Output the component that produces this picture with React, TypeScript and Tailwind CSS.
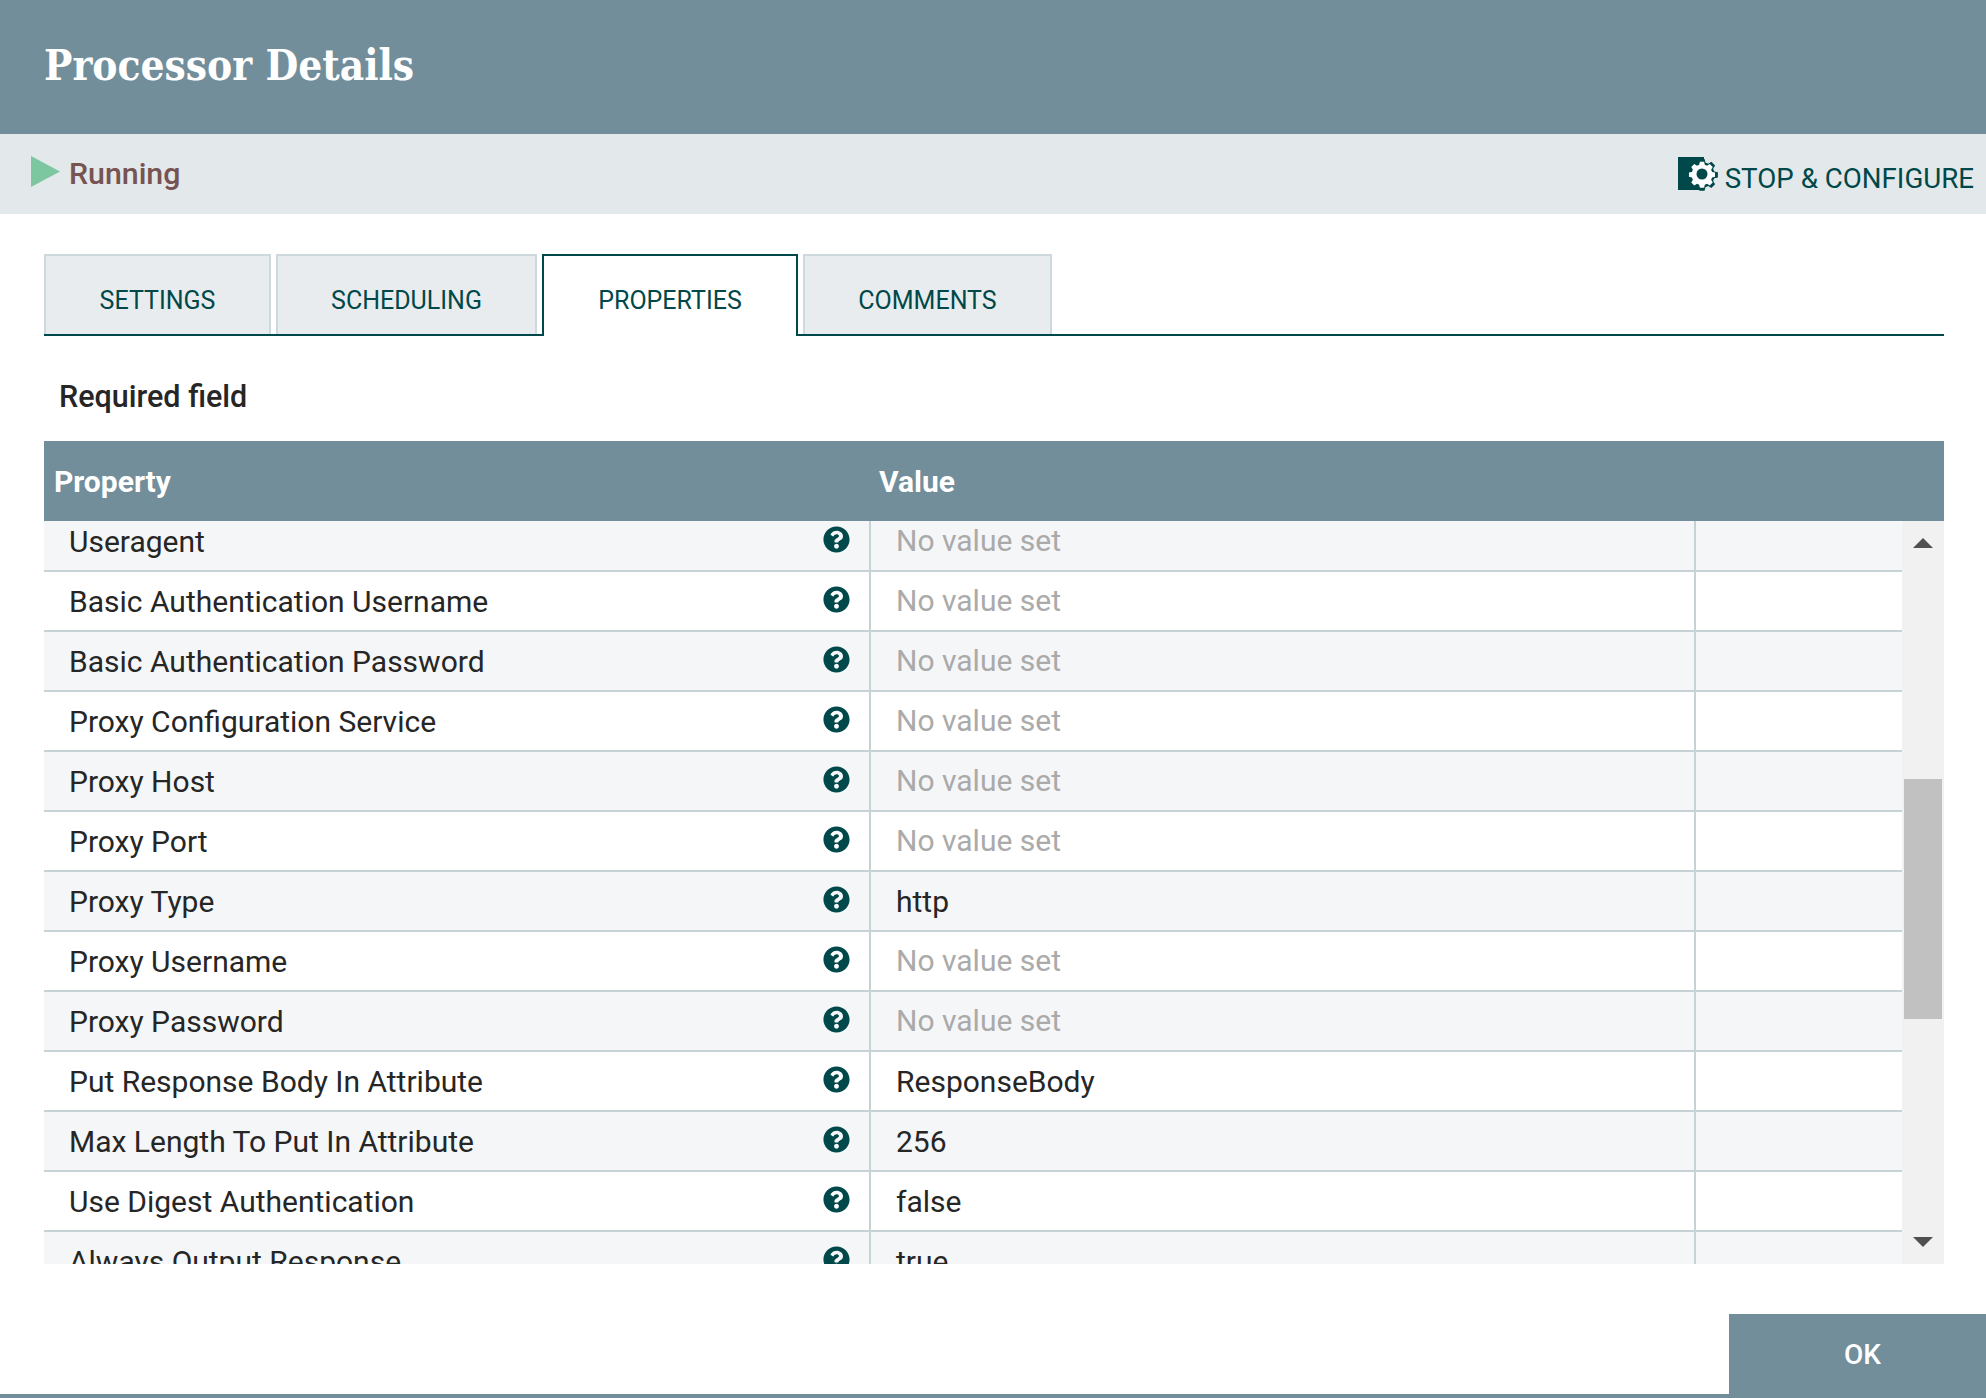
import { FaQuestionCircle } from 'react-icons/fa';

const rows = [
  { name: 'Useragent', value: null },
  { name: 'Basic Authentication Username', value: null },
  { name: 'Basic Authentication Password', value: null },
  { name: 'Proxy Configuration Service', value: null },
  { name: 'Proxy Host', value: null },
  { name: 'Proxy Port', value: null },
  { name: 'Proxy Type', value: 'http' },
  { name: 'Proxy Username', value: null },
  { name: 'Proxy Password', value: null },
  { name: 'Put Response Body In Attribute', value: 'ResponseBody' },
  { name: 'Max Length To Put In Attribute', value: '256' },
  { name: 'Use Digest Authentication', value: 'false' },
  { name: 'Always Output Response', value: 'true' },
];

const tabs = [
  { label: 'SETTINGS', width: 'w-[227px]', active: false },
  { label: 'SCHEDULING', width: 'w-[261px]', active: false },
  { label: 'PROPERTIES', width: 'w-[256px]', active: true },
  { label: 'COMMENTS', width: 'w-[249px]', active: false },
];

const gearPath =
  'M-2.6-15h5.2l.8 3.6 2.8 1.2 3.2-2 3.7 3.7-2 3.2 1.2 2.8 3.6.8v5.2l-3.6.8-1.2 2.8 2 3.2-3.7 3.7-3.200-2-2.8 1.2-.8 3.6h-5.2l-.8-3.6-2.8-1.2-3.2 2-3.700-3.700 2-3.200-1.2-2.800-3.600-.8v-5.200l3.600-.8 1.200-2.800-2-3.200 3.700-3.700 3.200 2 2.800-1.200z';

const StopConfigureIcon = () => (
  <svg width="40" height="36" viewBox="0 0 40 36">
    <path d="M0 1h26v33H0z" fill="#004849" />
    <g transform="translate(24 18)">
      <path d={gearPath} fill="#004849" />
      <path d={gearPath} fill="#fff" transform="scale(.82)" />
      <circle r="5.500" fill="#004849" />
    </g>
  </svg>
);

const App = () => {
  return (
    <div className="w-[1986px] h-[1398px] overflow-hidden bg-white flex flex-col font-['Roboto',sans-serif]">
      {/* Dialog header */}
      <div className="h-[134px] shrink-0 bg-[#728e9b] flex items-center pl-[44px]">
        <h1 className="font-['DejaVu_Serif_Condensed','DejaVu_Serif',serif] font-bold text-[42px] text-white -mt-[3px]">
          Processor Details
        </h1>
      </div>

      {/* Run status bar */}
      <div className="h-[80px] shrink-0 bg-[#e3e8eb] flex items-center justify-between pl-[31px] pr-[12px]">
        <div className="flex items-center gap-[9px]">
          <svg width="29" height="31" viewBox="0 0 29 31" className="-mt-[5px]">
            <path d="M0 0l29 15.500-29 15.500z" fill="#7dc7a0" />
          </svg>
          <span className="text-[30.300px] font-medium text-[#775351] pb-[1px]">Running</span>
        </div>
        <div className="flex items-center gap-[7px] text-[#004849] text-[27.700px]">
          <StopConfigureIcon />
          <span className="pt-[10px]">STOP &amp; CONFIGURE</span>
        </div>
      </div>

      {/* Tabs */}
      <div className="mr-[42px] ml-[44px] mt-[40px] h-[82px] shrink-0 flex gap-[5px] border-b-2 border-[#004849]">
        {tabs.map((tab) => (
          <div
            key={tab.label}
            className={
              tab.active
                ? `${tab.width} h-[82px] bg-white border-2 border-b-0 border-[#004849] flex items-center justify-center text-[25px] text-[#004849] pt-[9px]`
                : `${tab.width} h-[80px] bg-[#e9ecef] border-2 border-b-0 border-[#cdd9dc] flex items-center justify-center text-[25px] text-[#004849] pt-[11px]`
            }
          >
            {tab.label}
          </div>
        ))}
      </div>

      <div className="ml-[59px] mt-[41px] h-[40px] shrink-0 text-[30.500px] leading-[40px] font-medium text-[#262626]">
        Required field
      </div>

      {/* Property table */}
      <div className="mr-[42px] ml-[44px] mt-[24px] shrink-0">
        <div className="h-[80px] bg-[#728e9b] flex items-center text-white text-[30px] font-bold pt-[1px]">
          <div className="w-[827px] pl-[10px]">Property</div>
          <div className="pl-[8px]">Value</div>
        </div>
        <div className="h-[743px] flex overflow-hidden">
          <div className="flex-1 -mt-[9px]">
            {rows.map((row, i) => (
              <div
                key={row.name}
                className={`h-[60px] shrink-0 flex border-b-2 border-[#c7d2d7] text-[30px] text-[#262626] ${
                  i % 2 === 0 ? 'bg-[#f4f6f7]' : 'bg-white'
                }`}
              >
                <div className="w-[827px] pl-[25px] pr-[19px] flex items-center justify-between border-r-2 border-[#c7d2d7]">
                  <span>{row.name}</span>
                  <FaQuestionCircle size={27} color="#004849" className="-mt-[3px]" />
                </div>
                <div className="w-[825px] pl-[25px] flex items-center border-r-2 border-[#c7d2d7]">
                  {row.value ? (
                    <span>{row.value}</span>
                  ) : (
                    <span className="text-[#aaaaaa] pb-[2px]">No value set</span>
                  )}
                </div>
              </div>
            ))}
          </div>
          <div className="w-[42px] shrink-0 bg-[#f1f1f1] flex flex-col items-center">
            <svg width="20" height="10" viewBox="0 0 20 10" className="mt-[17px]">
              <path d="M10 0l10 10H0z" fill="#505050" />
            </svg>
            <div className="mt-[231px] w-[38px] h-[240px] bg-[#c1c1c1]" />
            <svg width="20" height="10" viewBox="0 0 20 10" className="mt-[218px]">
              <path d="M0 0h20L10 10z" fill="#505050" />
            </svg>
          </div>
        </div>
      </div>

      {/* Footer */}
      <div className="flex-1 flex flex-col justify-end">
        <div className="h-[80px] flex justify-end">
          <div className="w-[257px] bg-[#728e9b] flex items-center justify-center text-white text-[28px] font-medium pl-[10px] pt-[2px]">
            OK
          </div>
        </div>
        <div className="h-[4px] bg-[#728e9b]" />
      </div>
    </div>
  );
};

export default App;
